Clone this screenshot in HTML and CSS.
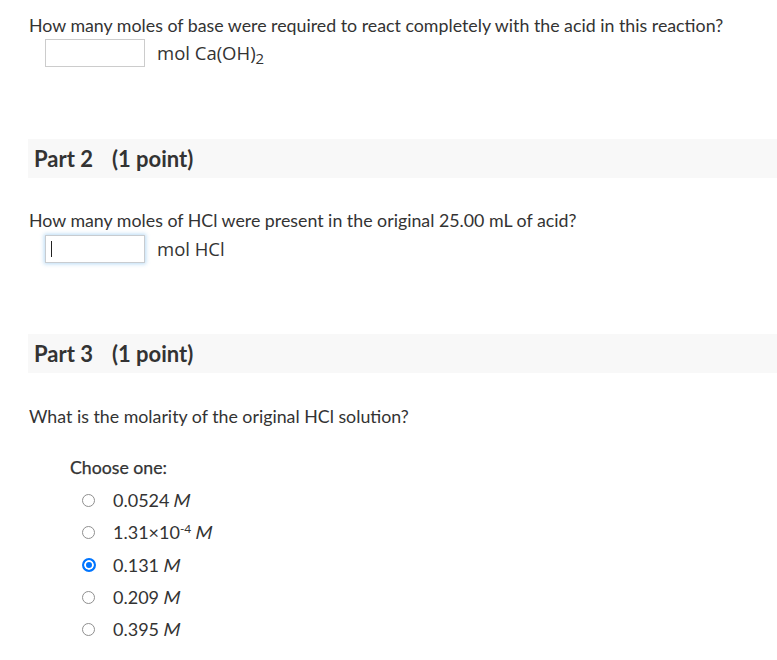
FILE: index.html
```html
<!DOCTYPE html>
<html>
<head>
<meta charset="utf-8">
<link rel="stylesheet" href="styles.css">
</head>
<body>
<div class="page">
  <p class="q q1">How many moles of base were required to react completely with the acid in this reaction?</p>
  <div class="answer">
    <input class="box" type="text">
    <span class="unit">mol Ca(OH)<sub>2</sub></span>
  </div>

  <div class="part part2"><span class="pname">Part 2</span><span class="pts">(1 point)</span></div>

  <p class="q q2">How many moles of HCl were present in the original 25.00 mL of acid?</p>
  <div class="answer">
    <div class="box focused"><span class="caret"></span></div>
    <span class="unit">mol HCl</span>
  </div>

  <div class="part part3"><span class="pname">Part 3</span><span class="pts">(1 point)</span></div>

  <p class="q q3">What is the molarity of the original HCl solution?</p>
  <div class="choose">Choose one:</div>
  <ul class="options">
    <li><span class="radio"></span><span class="opt">0.0524 <i>M</i></span></li>
    <li><span class="radio"></span><span class="opt">1.31×10<sup>-4</sup> <i>M</i></span></li>
    <li><span class="radio checked"></span><span class="opt">0.131 <i>M</i></span></li>
    <li><span class="radio"></span><span class="opt">0.209 <i>M</i></span></li>
    <li><span class="radio"></span><span class="opt">0.395 <i>M</i></span></li>
  </ul>
</div>
</body>
</html>
```

FILE: styles.css
```css
html, body {
  margin: 0;
  padding: 0;
  background: #fff;
}
.page {
  font-family: Lato, "Liberation Sans", sans-serif;
  color: #333;
  padding-top: 15px;
}
.q {
  margin: 0 0 0 29px;
  font-size: 17.8px;
  line-height: 20px;
  color: #333;
}
.answer {
  display: flex;
  align-items: center;
  margin: 4px 0 0 45px;
  height: 28px;
}
.q2 + .answer { margin-top: 5px; }
.box {
  box-sizing: border-box;
  width: 100px;
  height: 28px;
  border: 1px solid #ccc;
  background: #fff;
  margin: 0;
  padding: 0;
  outline: none;
  display: flex;
  align-items: center;
}
.focused {
  border-color: #c8ccd0;
  box-shadow: 0 0 4px 1px rgba(102, 175, 233, 0.45);
}
.caret {
  display: block;
  width: 1px;
  height: 16px;
  background: #222;
  margin-left: 5px;
}
.unit {
  font-family: "Open Sans", "Noto Sans", sans-serif;
  font-size: 18.5px;
  color: #333;
  margin-left: 12px;
  line-height: 20px;
}
.unit sub {
  font-size: 15px;
  vertical-align: -4px;
  line-height: 0;
}
.part {
  display: flex;
  align-items: center;
  height: 39px;
  margin-left: 28px;
  background: #f8f8f8;
  padding-left: 6px;
  font-weight: 700;
  font-size: 22px;
  color: #333;
}
.part2 { margin-top: 72px; }
.part3 { margin-top: 71px; }
.pts { margin-left: 19px; }
.q2 { margin-top: 32px; }
.q3 { margin-top: 33px; }
.choose {
  margin: 31px 0 0 70px;
  font-size: 17.7px;
  line-height: 22px;
  color: #333;
  -webkit-text-stroke: 0.25px #333;
}
.options {
  list-style: none;
  margin: 5px 0 0 0;
  padding: 0;
}
.options li {
  display: flex;
  align-items: center;
  height: 32.3px;
  padding-left: 82px;
}
.radio {
  box-sizing: border-box;
  width: 13px;
  height: 13px;
  border: 1px solid #8f8f8f;
  border-radius: 50%;
  background: #fff;
  flex: none;
}
.radio.checked {
  width: 14px;
  height: 14px;
  margin-left: -0.5px;
  border: 2px solid #0075ff;
  background: #0075ff;
  box-shadow: inset 0 0 0 2px #fff;
}
.options li .checked + .opt { margin-left: 17.5px; }
.opt {
  margin-left: 18px;
  font-size: 18px;
  color: #333;
  line-height: 20px;
}
.opt i {
  font-style: normal;
  display: inline-block;
  transform: skewX(-12deg);
}
.opt sup {
  font-size: 12px;
  vertical-align: 6px;
  line-height: 0;
}
```
